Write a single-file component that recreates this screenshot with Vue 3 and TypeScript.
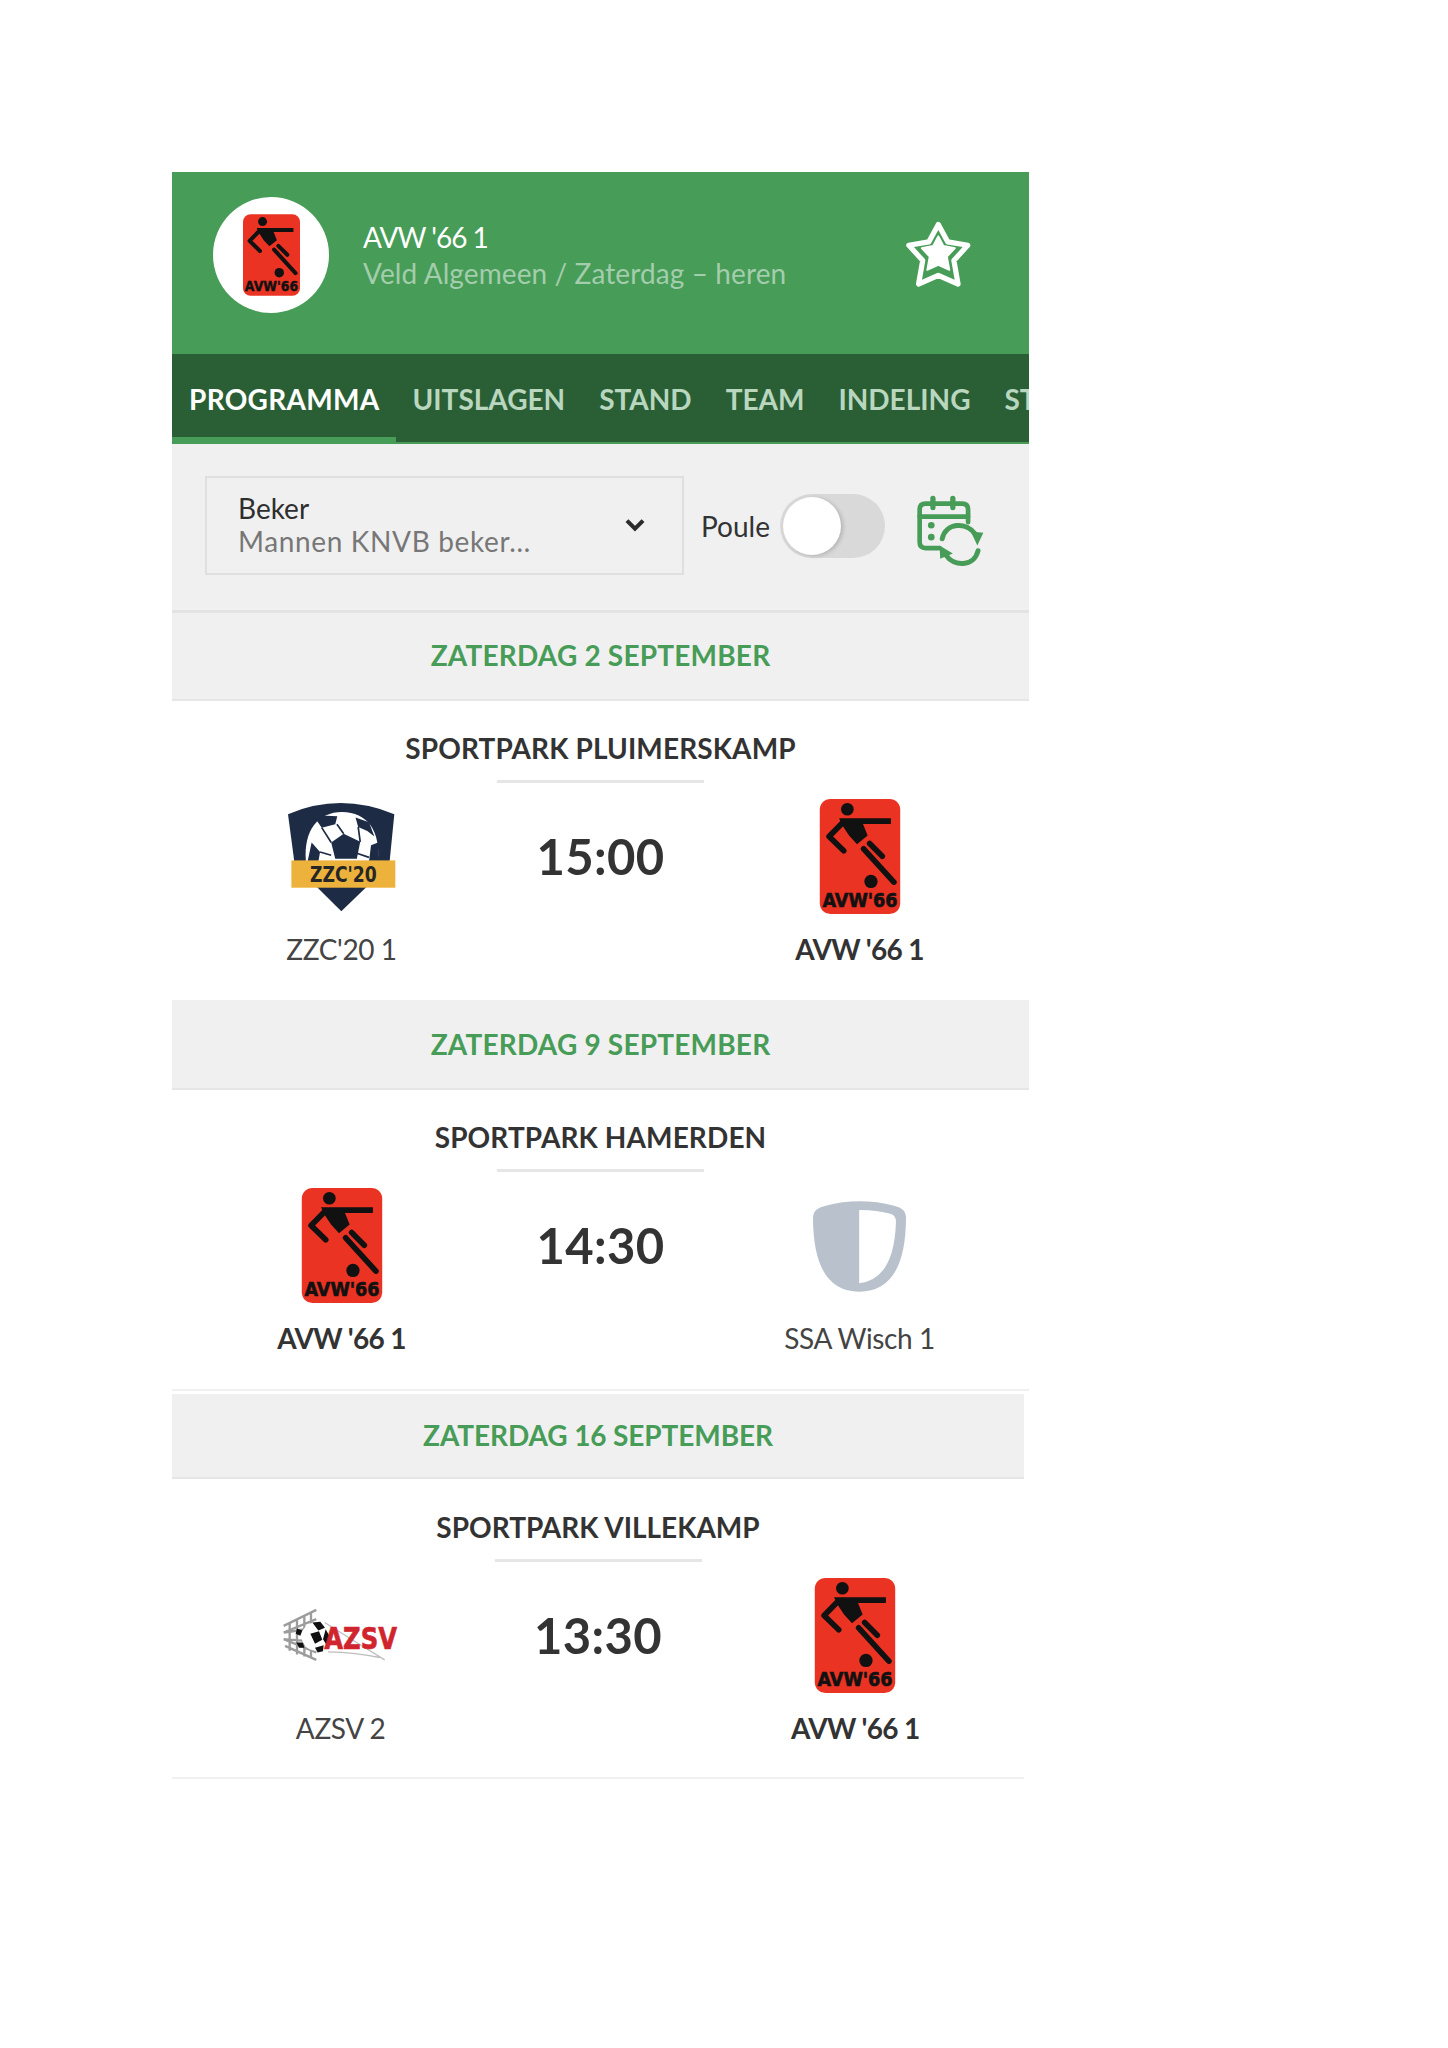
<script setup lang="ts">
import { h } from 'vue'
import type { FunctionalComponent } from 'vue'

type LogoId = 'avw' | 'zzc' | 'azsv' | 'ssa'
interface Team { name: string; logo: LogoId; own?: boolean }
interface Match { date: string; venue: string; time: string; home: Team; away: Team; tight?: boolean }
type Item = [string, Record<string, string | number>, string?]

const ink = '#111'
const navy = '#1d2b45'
const art: Record<LogoId, { viewBox: string; items: Item[] }> = {
  avw: {
    viewBox: '58 42 242 346',
    items: [
      ['rect', { x: 58, y: 42, width: 242, height: 346, rx: 32, fill: '#ea3323' }],
      ['circle', { cx: 141, cy: 73, r: 19, fill: ink }],
      ['path', { d: 'M116 100 H272 V117 H188 L202 152 L170 178 L146 152 L126 122 Z', fill: ink }],
      ['path', { d: 'M128 112 L86 155 L130 198', fill: 'none', stroke: ink, 'stroke-width': 17, 'stroke-linejoin': 'round', 'stroke-linecap': 'round' }],
      ['path', { d: 'M208 176 L246 214', fill: 'none', stroke: ink, 'stroke-width': 17, 'stroke-linecap': 'round' }],
      ['path', { d: 'M190 192 L281 292', fill: 'none', stroke: ink, 'stroke-width': 17, 'stroke-linecap': 'round' }],
      ['circle', { cx: 212, cy: 290, r: 20, fill: ink }],
      ['text', { x: 179, y: 367, 'text-anchor': 'middle', textLength: 226, lengthAdjust: 'spacingAndGlyphs', 'font-family': 'DejaVu Sans', 'font-weight': 700, 'font-size': 58, fill: ink, stroke: ink, 'stroke-width': 2 }, "AVW'66"],
    ],
  },
  zzc: {
    viewBox: '50 40 320 322',
    items: [
      ['path', { d: 'M50 74 Q205 8 365 74 L350 225 L208 362 L70 225 Z', fill: navy }],
      ['path', { d: 'M103 214 C95 122 140 68 210 68 C285 68 325 125 316 214 Z', fill: '#fff' }],
      ['path', { d: 'M215 132 L264 156 L254 206 L190 206 L178 158 Z', fill: navy }],
      ['path', { d: 'M150 78 L196 80 L190 104 L150 114 L136 94 Z M250 84 L290 98 L306 140 L285 124 L258 112 Z M120 158 L145 186 L140 214 L108 214 Z M296 166 L317 158 L318 214 L290 214 Z', fill: navy }],
      ['path', { d: 'M215 132 L195 104 M258 112 L264 156 M178 158 L150 114 M178 196 L145 186 M254 190 L290 202', stroke: navy, 'stroke-width': 5, fill: 'none' }],
      ['rect', { x: 60, y: 211, width: 308, height: 81, fill: '#edb23c' }],
      ['text', { x: 214, y: 274, 'text-anchor': 'middle', textLength: 198, lengthAdjust: 'spacingAndGlyphs', 'font-family': 'DejaVu Sans', 'font-weight': 700, 'font-size': 62, fill: '#262626' }, "ZZC'20"],
    ],
  },
  ssa: {
    viewBox: '72 62 278 273',
    items: [
      ['path', { d: 'M72 112 Q72 86 110 78 Q210 52 315 78 Q350 86 350 112 Q350 335 210 335 Q72 335 72 112 Z', fill: '#b9c1cd' }],
      ['path', { d: 'M210 91 Q265 92 303 102 Q320 106 320 126 Q315 298 210 310 Z', fill: '#fff' }],
    ],
  },
  azsv: {
    viewBox: '40 60 345 155',
    items: [
      ['path', { d: 'M42 110 L140 62 M42 130 L140 90 M42 150 L140 190 M46 170 L140 212 M42 130 Q120 120 140 110 M42 150 Q110 155 130 158 M60 100 V185 M82 88 V196 M104 78 V202 M124 68 V208', stroke: '#9c9c9c', 'stroke-width': 7, fill: 'none' }],
      ['path', { d: 'M165 100 Q260 160 345 212 M175 188 Q260 190 330 205', stroke: '#bdbdbd', 'stroke-width': 4, fill: 'none' }],
      ['circle', { cx: 138, cy: 142, r: 42, fill: '#fff' }],
      ['path', { d: 'M128 100 L152 98 L166 116 L146 124 Z M122 134 L148 126 L158 152 L136 164 Z M168 120 L180 142 L170 166 L160 150 Z M82 118 L98 124 L92 140 L78 134 Z M80 160 L100 160 L104 176 L88 176 Z M136 176 L162 168 L160 186 L144 190 Z', fill: '#111' }],
      ['text', { x: 273, y: 181, 'text-anchor': 'middle', textLength: 218, lengthAdjust: 'spacingAndGlyphs', 'font-family': 'DejaVu Sans', 'font-weight': 700, 'font-size': 88, fill: '#d1252d', stroke: '#d1252d', 'stroke-width': 2 }, 'AZSV'],
    ],
  },
}

const TeamLogo: FunctionalComponent<{ id: LogoId }> = (props) =>
  h('svg', { viewBox: art[props.id].viewBox }, art[props.id].items.map(([tag, attrs, text]) => h(tag, attrs, text)))
TeamLogo.props = ['id']

const tabs = ['PROGRAMMA', 'UITSLAGEN', 'STAND', 'TEAM', 'INDELING', 'STATISTIEKEN']
const avw: Team = { name: "AVW '66 1", logo: 'avw', own: true }
const matches: Match[] = [
  { date: 'ZATERDAG 2 SEPTEMBER', venue: 'SPORTPARK PLUIMERSKAMP', time: '15:00', home: { name: "ZZC'20 1", logo: 'zzc' }, away: avw },
  { date: 'ZATERDAG 9 SEPTEMBER', venue: 'SPORTPARK HAMERDEN', time: '14:30', home: avw, away: { name: 'SSA Wisch 1', logo: 'ssa' } },
  { date: 'ZATERDAG 16 SEPTEMBER', venue: 'SPORTPARK VILLEKAMP', time: '13:30', home: { name: 'AZSV 2', logo: 'azsv' }, away: avw, tight: true },
]
</script>

<template>
  <div class="page">
    <main class="app">
      <header class="head">
        <div class="crest"><TeamLogo id="avw" class="crest-logo" /></div>
        <div class="head-text">
          <div class="head-name">AVW '66 1</div>
          <div class="head-sub">Veld Algemeen / Zaterdag – heren</div>
        </div>
        <svg class="star" viewBox="15 65 200 205" aria-hidden="true">
          <path d="M113 78 L140 128 L198 138 L158 182 L170 250 L113 225 L56 250 L68 182 L28 138 L86 128 Z" fill="none" stroke="#fff" stroke-width="15" stroke-linejoin="round" />
          <path d="M113 112 L128 140 L161 146 L138 171 L145 209 L113 195 L81 209 L88 171 L65 146 L98 140 Z" fill="#fff" stroke="#fff" stroke-width="5" stroke-linejoin="round" />
        </svg>
      </header>

      <nav class="tabs">
        <div v-for="(t, i) in tabs" :key="t" class="tab" :class="{ active: i === 0 }">{{ t }}</div>
      </nav>

      <section class="filters">
        <div class="select">
          <div class="select-text">
            <div class="select-title">Beker</div>
            <div class="select-sub">Mannen KNVB beker…</div>
          </div>
          <svg class="chev" viewBox="0 0 20 14" aria-hidden="true">
            <path d="M2.5 2.5 L10 10 L17.5 2.5" fill="none" stroke="#2b2b2b" stroke-width="3.8" />
          </svg>
        </div>
        <span class="poule">Poule</span>
        <div class="toggle"><div class="thumb"></div></div>
        <svg class="cal" viewBox="50 40 205 220" aria-hidden="true">
          <g fill="none" stroke="#479c57" stroke-width="14" stroke-linecap="round">
            <path d="M118 200 H76 Q58 200 58 182 V84 Q58 66 76 66 H186 Q204 66 204 84 V122" />
            <path d="M58 105 H204" />
            <path d="M98 50 V78 M158 50 V78" stroke-width="16" />
            <path d="M126 172 C136 122 200 120 226 158" stroke-width="15" />
            <path d="M234 208 C222 258 160 256 138 222" stroke-width="15" />
          </g>
          <path d="M212 150 L250 154 L232 192 Z M118 192 L158 216 L120 232 Z" fill="#479c57" />
          <circle cx="93" cy="131" r="10" fill="#479c57" />
          <circle cx="93" cy="167" r="10" fill="#479c57" />
        </svg>
      </section>

      <div v-for="m in matches" :key="m.date" class="group" :class="{ tight: m.tight }">
        <div class="date">{{ m.date }}</div>
        <article class="match">
          <h2 class="venue">{{ m.venue }}</h2>
          <div class="rule"></div>
          <div class="row">
            <div class="team" :class="{ own: m.home.own }">
              <TeamLogo :id="m.home.logo" class="logo" :class="'is-' + m.home.logo" />
              <div class="team-name">{{ m.home.name }}</div>
            </div>
            <div class="time">{{ m.time }}</div>
            <div class="team" :class="{ own: m.away.own }">
              <TeamLogo :id="m.away.logo" class="logo" :class="'is-' + m.away.logo" />
              <div class="team-name">{{ m.away.name }}</div>
            </div>
          </div>
        </article>
      </div>
    </main>
  </div>
</template>

<style>
html, body { margin: 0; background: #fff; }
</style>

<style scoped>
.page {
  padding: 172px 0 270px 172px;
  font-family: Lato, "Noto Sans", sans-serif;
  color: #333;
}
.app { width: 857px; }

.head {
  height: 182px;
  background: #479c57;
  display: flex;
  align-items: center;
  padding: 0 0 16px 41px;
  box-sizing: border-box;
}
.crest {
  width: 116px;
  height: 116px;
  border-radius: 50%;
  background: #fff;
  display: flex;
  align-items: center;
  justify-content: center;
}
.crest-logo { width: 57px; height: 82px; }
.head-text { margin-left: 34px; flex: 1; }
.head-name { font-size: 28px; line-height: 36px; color: #fff; letter-spacing: -1px; }
.head-sub { font-size: 28px; line-height: 36px; color: #a3cdac; letter-spacing: .1px; }
.star { width: 70px; height: 71px; margin-right: 55px; }

.tabs {
  height: 90px;
  background: #2a5f36;
  display: flex;
  overflow: hidden;
  border-bottom: 2px solid #479c57;
  box-sizing: border-box;
}
.tab {
  flex: none;
  padding: 1px 17px 0;
  line-height: 88px;
  font-size: 28px;
  font-weight: 700;
  color: #b9d6bf;
}
.tab.active {
  padding-right: 16px;
  letter-spacing: .3px;
  color: #fff;
  box-shadow: inset 0 -5px 0 #479c57;
}

.filters {
  height: 169px;
  box-sizing: border-box;
  background: #f0f0f0;
  border-bottom: 3px solid #e3e3e3;
  padding: 32px 0 0 33px;
  display: flex;
  align-items: flex-start;
}
.select {
  width: 479px;
  height: 99px;
  box-sizing: border-box;
  border: 2px solid #dfdfdf;
  display: flex;
  align-items: center;
  padding: 0 36px 3px 31px;
}
.select-text { flex: 1; }
.select-title { font-size: 28px; line-height: 33px; color: #2e2e2e; }
.select-sub { font-size: 28px; line-height: 32px; color: #777; letter-spacing: .65px; }
.chev { width: 22px; height: 15px; margin-top: 3px; }
.poule { margin: 32px 0 0 17px; font-size: 28px; line-height: 36px; color: #333; }
.toggle {
  width: 105px;
  height: 64px;
  margin: 18px 0 0 10px;
  border-radius: 32px;
  background: #d9d9d9;
  padding: 3px;
  box-sizing: border-box;
}
.thumb {
  width: 58px;
  height: 58px;
  border-radius: 50%;
  background: #fff;
  box-shadow: 2px 1px 4px rgba(0, 0, 0, .18);
}
.cal { width: 68px; height: 73px; margin: 19px 0 0 32px; }

.date {
  height: 88px;
  padding-bottom: 2px;
  box-sizing: border-box;
  background: #f0f0f0;
  border-bottom: 2px solid #e6e6e6;
  display: flex;
  align-items: center;
  justify-content: center;
  font-size: 28px;
  font-weight: 700;
  letter-spacing: .2px;
  color: #479c57;
}
.match {
  height: 301px;
  box-sizing: border-box;
  padding-top: 30px;
  background: #fff;
  border-bottom: 2px solid #f0f0f0;
}
.venue {
  margin: 0;
  text-align: center;
  font-size: 28px;
  line-height: 34px;
  font-weight: 700;
  letter-spacing: .12px;
  color: #333;
}
.rule { width: 207px; height: 3px; margin: 15px auto 0; background: #e6e6e6; }
.row {
  display: grid;
  grid-template-columns: repeat(3, 1fr);
  padding: 0 40px;
  margin-top: 16px;
}
.team { display: flex; flex-direction: column; align-items: center; }
.logo { width: 82px; height: 115px; }
.logo.is-zzc { width: 108px; height: 110px; margin: 3px 0 2px; }
.logo.is-ssa { width: 93px; height: 92px; margin: 12px 0 11px; }
.logo.is-azsv { width: 115px; height: 52px; margin: 31px 0 32px; }
.team-name { margin-top: 18px; font-size: 28px; line-height: 34px; color: #444; letter-spacing: -.4px; }
.team.own .team-name { font-weight: 700; color: #333; letter-spacing: -.7px; }
.time {
  height: 115px;
  line-height: 115px;
  text-align: center;
  font-size: 49px;
  font-weight: 700;
  letter-spacing: .3px;
  color: #333;
}
.group.tight { width: 852px; margin-top: 3px; }
.group.tight .date { height: 85px; letter-spacing: -.1px; }
.group.tight .match { height: 300px; padding-top: 31px; }
.group.tight .venue { letter-spacing: 0; }
</style>
